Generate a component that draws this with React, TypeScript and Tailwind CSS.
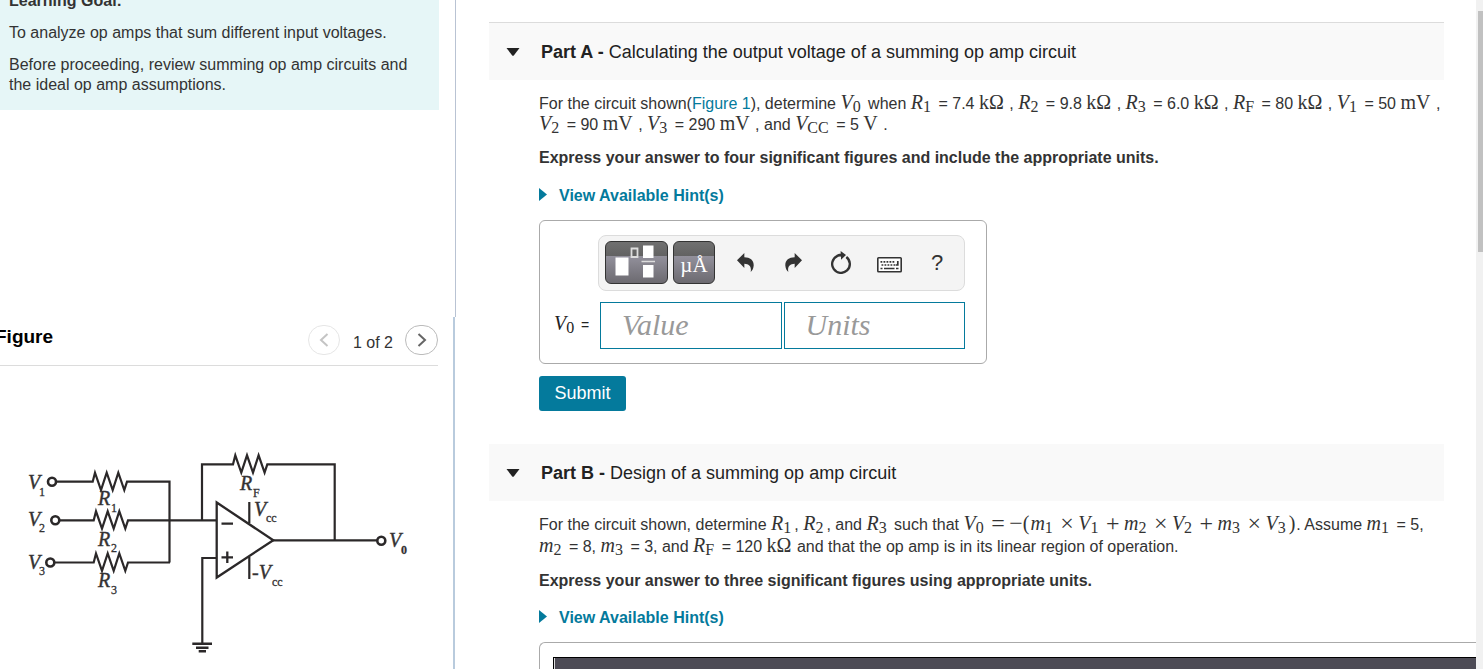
import React from "react";

const serif = "font-['Liberation_Serif',serif]";

function Sym({ v, s }: { v: string; s?: string }) {
  return (
    <span className={`${serif} mr-[3px] whitespace-nowrap text-[20px] leading-[0]`}>
      <span className="italic">{v}</span>
      {s && <span className="align-[-3px] text-[16px] leading-[0]">{s}</span>}
    </span>
  );
}

function Unit({ children }: { children: string }) {
  return <span className={`${serif} mr-px text-[20px] leading-[0]`}>{children}</span>;
}

function Op({ children }: { children: string }) {
  return <span className={`${serif} align-[-1px] text-[24px] leading-[0]`}>{children}</span>;
}

function PartHeader({ label, title, first }: { label: string; title: string; first?: boolean }) {
  return (
    <header
      className={`flex items-center bg-[#f9f9f9] ${first ? "h-[58px] border-t border-[#dcdcdc]" : "h-[57px]"}`}
    >
      <button type="button" aria-label={`Collapse ${label}`} className="ml-4 mr-5 flex w-4 justify-center">
        <svg width="14" height="8" viewBox="0 0 14 8">
          <path d="M0.5 0h13L7.8 7.4Q7 8 6.2 7.4Z" fill="#222" />
        </svg>
      </button>
      <h2 className="text-[18px] leading-6 text-[#222]">
        <b>{label} -</b> {title}
      </h2>
    </header>
  );
}

function Hints() {
  return (
    <button type="button" className="flex h-5 items-center text-[16px] font-bold leading-5 text-[#047a9c]">
      <svg className="mb-1 mr-3" width="8" height="13" viewBox="0 0 8 13">
        <path d="M0 0L8 6.5L0 13Z" fill="#047a9c" />
      </svg>
      View Available Hint(s)
    </button>
  );
}

const ZIG = "l2.3 -9l6 17.3l5.7 -17.3l6 17.3l5.6 -17.3l6 17.3l2.7 -8.3";

function Circuit() {
  return (
    <svg
      className="block"
      width="454"
      height="303"
      viewBox="0 366 454 303"
      role="img"
      aria-label="Summing op amp circuit"
      fontFamily="Liberation Serif, serif"
    >
      <g fill="none" stroke="#2b2829" strokeWidth="2.2" strokeLinejoin="miter">
        <circle cx="52" cy="481.7" r="4" strokeWidth="2.6" />
        <circle cx="55.3" cy="520.3" r="4" strokeWidth="2.6" />
        <circle cx="50.3" cy="562.5" r="4" strokeWidth="2.6" />
        <circle cx="381.3" cy="540.7" r="4" strokeWidth="2.6" />
        <path d={`M56 481.7H92.7${ZIG}H169.5V562.5`} />
        <path d={`M60 520.3H93.7${ZIG}H216`} />
        <path d={`M55 562.5H93.7${ZIG}H170`} />
        <path d={`M202 520.3V464.3H233${ZIG}H334.7V540`} />
        <path d="M216.7 502.5V577.5L273.3 540.3Z" strokeWidth="2.3" />
        <path d="M273 540.3H377M249.3 502V523M249.3 557V579" />
        <path d="M221.5 523.7H233M221.5 557.3H233M227.3 551.5V563" strokeWidth="2.3" />
        <path d="M216 558H202.3V643.5" />
        <path d="M192.3 643.7H212M196 647.7H208.5M198.7 651.3H206" strokeWidth="2.6" />
      </g>
      <g fill="#343233" stroke="#343233" strokeWidth="0.4" fontStyle="italic" fontSize="20">
        <text x="28" y="489">V</text>
        <text x="28" y="526">V</text>
        <text x="28" y="569">V</text>
        <text x="98" y="505">R</text>
        <text x="98" y="546">R</text>
        <text x="98" y="587">R</text>
        <text x="240" y="490">R</text>
        <text x="254" y="516">V</text>
        <text x="252" y="579">-V</text>
        <text x="389" y="547">V</text>
      </g>
      <g fill="#343233" stroke="#343233" strokeWidth="0.3" fontSize="12">
        <text x="39" y="496">1</text>
        <text x="39" y="532">2</text>
        <text x="39" y="575">3</text>
        <text x="111" y="512">1</text>
        <text x="111" y="552">2</text>
        <text x="111" y="594">3</text>
        <text x="253" y="497">F</text>
        <text x="266" y="522">cc</text>
        <text x="272" y="586">cc</text>
        <text x="401" y="554" fontWeight="bold">0</text>
      </g>
    </svg>
  );
}

const DARK =
  "h-[43px] rounded-md border border-[#333] bg-[linear-gradient(#707070_0%,#626262_34%,#92909b_35%,#6c6a70_100%)] flex items-center justify-center";

const TOOL = "flex h-10 w-12 items-center justify-center";

function Toolbar() {
  return (
    <div className="flex h-[56px] items-center rounded-lg border border-[#dcdcdc] bg-[#f4f4f4] pb-px pl-[6px]">
      <button type="button" aria-label="Templates" className={`${DARK} mr-[5px] w-[63px] pb-0.5 pr-[3px]`}>
        <svg width="40" height="34" viewBox="0 0 40 34">
          <path d="M0.5 12.5h13v18h-13z" fill="#fff" />
          <path d="M16.5 3.5h6v8.5h-6z" fill="none" stroke="#ddd" strokeWidth="1.8" />
          <path d="M28 0.5h10.5v12.5h-10.5zM28 20h10.5v12.5h-10.5z" fill="#fff" />
          <path d="M26.5 16.5h13.5" stroke="#ddd" strokeWidth="1.5" />
        </svg>
      </button>
      <button
        type="button"
        aria-label="Symbols"
        className={`${DARK} ${serif} mr-[6px] w-[42px] pt-[6px] text-[21px] leading-none text-white`}
      >
        µÅ
      </button>
      <button type="button" aria-label="Undo" className={TOOL}>
        <svg width="17" height="19" viewBox="0 0 51 57">
          <path d="M0 22L22 0V13C40 13 51 23 50 38C49 47 46 52 41 57C44 42 38 33 22 32V45Z" fill="#333" />
        </svg>
      </button>
      <button type="button" aria-label="Redo" className={TOOL}>
        <svg width="17" height="19" viewBox="0 0 51 57">
          <path d="M51 22L29 0V13C11 13 0 23 1 38C2 47 5 52 10 57C7 42 13 33 29 32V45Z" fill="#333" />
        </svg>
      </button>
      <button type="button" aria-label="Reset" className={TOOL}>
        <svg width="20" height="23" viewBox="0 0 60 69">
          <path d="M19 15A26.500 26.500 0 1 0 46 18" fill="none" stroke="#333" strokeWidth="7" />
          <path d="M29 0L45 12L30 26V17C26 16 22 17 18 19L16 12C20 9 24 8 29 8Z" fill="#333" />
        </svg>
      </button>
      <button type="button" aria-label="Keyboard shortcuts" className={TOOL}>
        <svg className="mt-1" width="25" height="16" viewBox="0 0 25 16">
          <rect x="0.8" y="0.8" width="23.4" height="14" rx="0.8" fill="#fff" stroke="#333" strokeWidth="1.6" />
          <path d="M3.5 4.8H18M4.5 8H18" stroke="#333" strokeWidth="1.7" strokeDasharray="1.8 1.2" />
          <path d="M18.5 8H20.8V4" fill="none" stroke="#333" strokeWidth="1.7" />
          <path d="M3.5 11.5h2M7 11.5h10.5M19 11.5h2.5" stroke="#333" strokeWidth="1.7" />
        </svg>
      </button>
      <button type="button" aria-label="Help" className={`${TOOL} text-[22px] leading-none text-[#333]`}>
        ?
      </button>
    </div>
  );
}

const FIELD = `${serif} h-[47px] w-full min-w-0 border border-[#047a9c] bg-white pb-0.5 pl-[21px] text-[30px] italic text-[#333] placeholder:text-[#999] placeholder:opacity-100 outline-none`;

export default function App() {
  return (
    <div className="flex h-screen overflow-hidden bg-white font-['Liberation_Sans',Arial,sans-serif] text-[16px] text-[#333]">
      <aside className="flex w-[456px] shrink-0 flex-col">
        <section className="h-[317px] shrink-0 border-r border-[#b9c3d3] pr-4">
          <div className="flex h-[110px] flex-col justify-end bg-[#e6f6f7] pb-[15px] pl-[9px] leading-5">
            <h2 className="font-bold">Learning Goal:</h2>
            <p className="mt-3">To analyze op amps that sum different input voltages.</p>
            <p className="mt-3">
              Before proceeding, review summing op amp circuits and
              <br />
              the ideal op amp assumptions.
            </p>
          </div>
        </section>
        <section className="mr-px flex-1 overflow-hidden border-r-2 border-[#b9cbdd]">
          <div className="mr-[15px] flex h-[49px] items-center border-b border-[#dcdcdc]">
            <h2 className="-ml-[5px] mb-2 flex-1 text-[19px] font-bold leading-6 text-black">Figure</h2>
            <button
              type="button"
              aria-label="Previous figure"
              className="mb-0.5 flex h-[30px] w-8 items-center justify-center rounded-full border border-[#e6e6e6]"
            >
              <svg width="10" height="14" viewBox="0 0 10 14">
                <path d="M8.5 1L2 7L8.5 13" fill="none" stroke="#c4c4c4" strokeWidth="2" />
              </svg>
            </button>
            <span className="ml-[13px] mr-3 pt-1">1 of 2</span>
            <button
              type="button"
              aria-label="Next figure"
              className="mb-0.5 flex h-[30px] w-[33px] items-center justify-center rounded-full border border-[#bbb]"
            >
              <svg width="10" height="14" viewBox="0 0 10 14">
                <path d="M1.5 1L8 7L1.5 13" fill="none" stroke="#666" strokeWidth="2" />
              </svg>
            </button>
          </div>
          <Circuit />
        </section>
      </aside>

      <main className="min-w-0 flex-1 overflow-hidden pl-[33px] pr-8 pt-[22px]">
        <section>
          <PartHeader first label="Part A" title="Calculating the output voltage of a summing op amp circuit" />
          <div className="pl-[50px] pt-[13px]">
            <p className="whitespace-nowrap leading-[21px]">
              For the circuit shown(
              <a href="#figure" className="text-[#047a9c]">
                Figure 1
              </a>
              ), determine <Sym v="V" s="0" /> when <Sym v="R" s="1" /> = 7.4 <Unit>kΩ</Unit> , <Sym v="R" s="2" /> = 9.8{" "}
              <Unit>kΩ</Unit> , <Sym v="R" s="3" /> = 6.0 <Unit>kΩ</Unit> , <Sym v="R" s="F" /> = 80 <Unit>kΩ</Unit> ,{" "}
              <Sym v="V" s="1" /> = 50 <Unit>mV</Unit> ,
              <br />
              <Sym v="V" s="2" /> = 90 <Unit>mV</Unit> , <Sym v="V" s="3" /> = 290 <Unit>mV</Unit> , and{" "}
              <Sym v="V" s="CC" /> = 5 <Unit>V</Unit> .
            </p>
            <p className="mt-[13px] font-bold leading-5">
              Express your answer to four significant figures and include the appropriate units.
            </p>
            <div className="mt-[18px]">
              <Hints />
            </div>
            <div className="mt-[14px] w-[448px] rounded-md border border-[#aaa] pb-[14px] pl-[14px] pr-[21px] pt-[14px]">
              <div className="ml-11">
                <Toolbar />
              </div>
              <div className="mt-[11px] flex items-center">
                <label htmlFor="value" className="w-[46px] shrink-0 whitespace-nowrap text-[14px] text-[#222]">
                  <Sym v="V" s="0" /> =
                </label>
                <div className="grid min-w-0 flex-1 grid-cols-2 gap-[2px]">
                  <input id="value" placeholder="Value" className={FIELD} />
                  <input id="units" aria-label="Units" placeholder="Units" className={FIELD} />
                </div>
              </div>
            </div>
            <button
              type="button"
              className="mt-3 block h-[35px] w-[87px] rounded-[3px] bg-[#047a9c] pb-0.5 text-[18px] leading-none text-white"
            >
              Submit
            </button>
          </div>
        </section>

        <section className="mt-[33px]">
          <PartHeader label="Part B" title="Design of a summing op amp circuit" />
          <div className="pl-[50px] pt-[13px]">
            <p className="whitespace-nowrap leading-[22px]">
              For the circuit shown, determine <Sym v="R" s="1" />, <Sym v="R" s="2" />, and <Sym v="R" s="3" /> such that{" "}
              <Sym v="V" s="0" /> <Op>=</Op> <Op>−</Op>
              <Unit>(</Unit>
              <Sym v="m" s="1" /> <Op>×</Op> <Sym v="V" s="1" /> <Op>+</Op> <Sym v="m" s="2" /> <Op>×</Op>{" "}
              <Sym v="V" s="2" /> <Op>+</Op> <Sym v="m" s="3" /> <Op>×</Op> <Sym v="V" s="3" />
              <Unit>)</Unit>. Assume <Sym v="m" s="1" /> = 5,
              <br />
              <Sym v="m" s="2" /> = 8, <Sym v="m" s="3" /> = 3, and <Sym v="R" s="F" /> = 120 <Unit>kΩ</Unit> and that the
              op amp is in its linear region of operation.
            </p>
            <p className="mt-[13px] font-bold leading-5">
              Express your answer to three significant figures using appropriate units.
            </p>
            <div className="mt-[17px]">
              <Hints />
            </div>
            <div className="-mr-8 mt-[14px] h-40 rounded-tl-md border-l border-t border-[#aaa] pl-[13px] pt-[14px]">
              <div className="h-40 border-l border-t border-black bg-[#4d4b55]">
                <div className="h-full border-l border-[#ddd]" />
              </div>
            </div>
          </div>
        </section>
      </main>

      <div className="w-[7px] shrink-0 bg-[#f1f1f1] pl-[2px] pt-[11px]">
        <div className="h-[241px] bg-[#c1c1c1]" />
      </div>
    </div>
  );
}
